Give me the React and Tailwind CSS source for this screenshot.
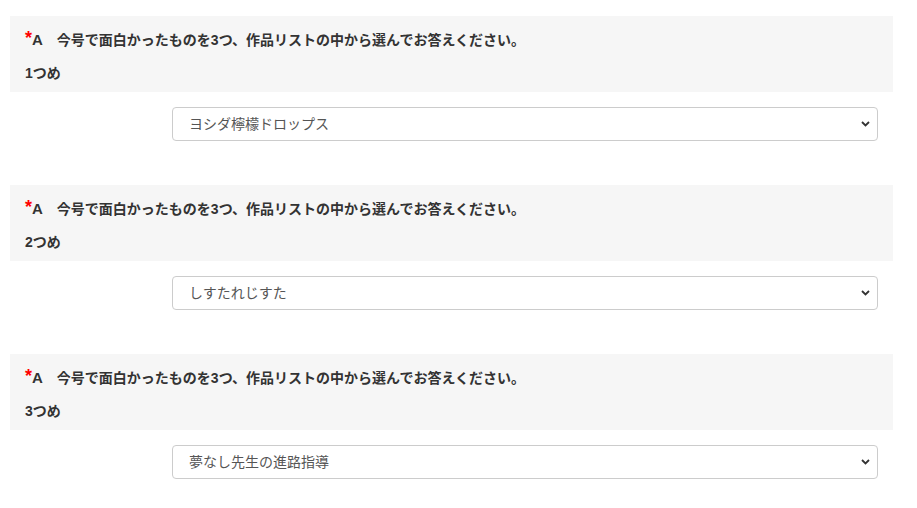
import { useState } from 'react'

const QUESTION = '今号で面白かったものを3つ、作品リストの中から選んでお答えください。'

const OPTIONS = [
  'ヨシダ檸檬ドロップス',
  'しすたれじすた',
  '夢なし先生の進路指導',
]

const FONT = { fontFamily: 'Arial, "Liberation Sans", "Noto Sans CJK JP", sans-serif' }

function Chevron() {
  return (
    <svg
      width="9"
      height="6"
      viewBox="0 0 9 6"
      className="pointer-events-none absolute right-[8px] top-1/2 -translate-y-1/2"
    >
      <path d="M1 1 L4.5 4.5 L8 1" fill="none" stroke="#333" strokeWidth="1.8" />
    </svg>
  )
}

function Question({ index, defaultValue }) {
  const [value, setValue] = useState(defaultValue)

  return (
    <div className="mb-[44px]">
      <div className="bg-[#f6f6f6] ml-[10px] mr-[24px] h-[76px] pl-[15px] pt-[15px]">
        <p className="text-[14px] font-bold text-[#333] leading-[18px] flex items-start">
          <span className="text-[#ff0000] text-[18px] leading-[14px] font-bold">*</span>
          <span className="text-[15px]">A</span>
          <span className="ml-[14px]">{QUESTION}</span>
        </p>
        <p className="mt-[15px] text-[14px] font-bold text-[#333] leading-[18px]">{index}つめ</p>
      </div>
      <div className="mt-[15px] ml-[172px] mr-[39px] relative">
        <select
          value={value}
          onChange={(e) => setValue(e.target.value)}
          className="w-full h-[34px] appearance-none bg-white border border-[#ccc] rounded-[4px] pl-[16px] pr-[24px] text-[14px] text-[#555] outline-none"
          style={FONT}
        >
          {OPTIONS.map((opt) => (
            <option key={opt} value={opt}>{opt}</option>
          ))}
        </select>
        <Chevron />
      </div>
    </div>
  )
}

export default function App() {
  return (
    <div className="bg-white w-[917px] h-[508px] overflow-hidden pt-[16px]" style={FONT}>
      <Question index={1} defaultValue={OPTIONS[0]} />
      <Question index={2} defaultValue={OPTIONS[1]} />
      <Question index={3} defaultValue={OPTIONS[2]} />
    </div>
  )
}
